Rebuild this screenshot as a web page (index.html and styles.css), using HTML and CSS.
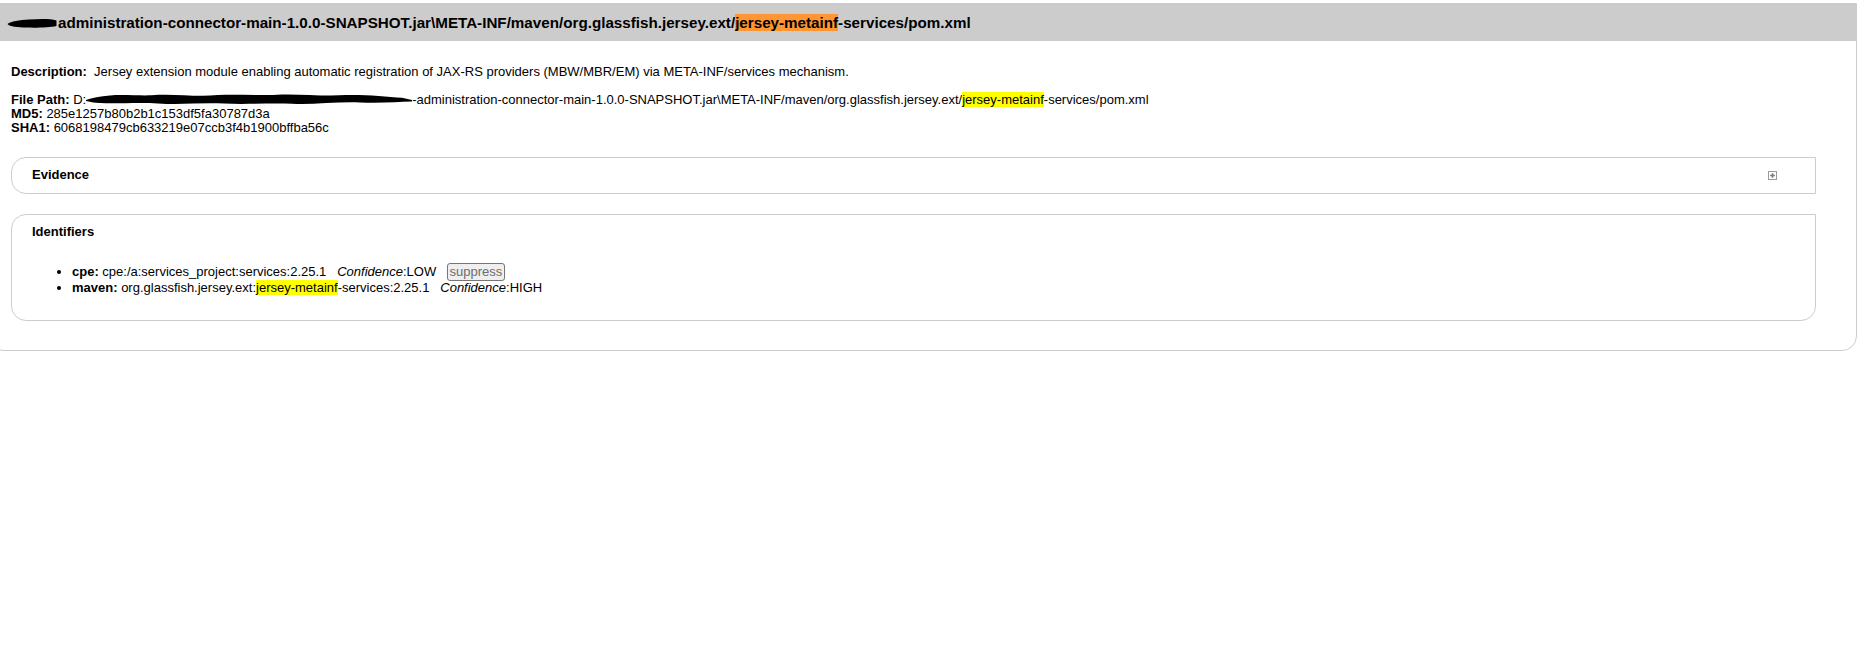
FILE: index.html
```html
<!DOCTYPE html>
<html lang="en">
<head>
<meta charset="utf-8">
<title>Dependency report</title>
<link rel="stylesheet" href="styles.css">
</head>
<body>
<div class="section">
  <h3 class="section-header"><svg class="redact-head" width="50" height="10" viewBox="0 0 50 10"><path d="M0.5 6 C4 3.5, 12 2, 22 1.5 C32 1, 43 0.5, 49.5 2.5 L49.5 8 C43 9.5, 32 9.8, 20 9.6 C10 9.4, 3 8.8, 0.5 6 Z" fill="#000"/></svg>administration-connector-main-1.0.0-SNAPSHOT.jar\META-INF/maven/org.glassfish.jersey.ext/<mark class="hl-active">jersey-metainf</mark>-services/pom.xml</h3>
  <div class="section-body">
    <p class="desc"><b>Description:</b>&nbsp; Jersey extension module enabling automatic registration of JAX-RS providers (MBW/MBR/EM) via META-INF/services mechanism.</p>
    <p class="meta"><b>File Path:</b> D:<svg class="redact-path" width="326" height="11" viewBox="0 0 326 11"><path d="M0 6 C6 3.5, 14 2.5, 24 1.5 C38 0, 58 2.5, 72 0.8 C92 0, 112 3, 132 1 C152 0, 176 2, 196 0.5 C216 0, 240 2.5, 260 1 C280 0.5, 300 2.5, 316 3.8 L326 6 L326 7.5 C312 7.8, 294 9.4, 274 8.4 C250 7.6, 228 10.8, 206 9.8 C184 8.8, 162 10.8, 138 9.6 C116 8.6, 94 10.8, 72 9.4 C50 8.2, 30 10, 14 9 C8 8.6, 3 7.8, 0 7 Z" fill="#000"/></svg>-administration-connector-main-1.0.0-SNAPSHOT.jar\META-INF/maven/org.glassfish.jersey.ext/<mark class="hl">jersey-metainf</mark>-services/pom.xml<br>
    <b>MD5:</b> 285e1257b80b2b1c153df5fa30787d3a<br>
    <b>SHA1:</b> 6068198479cb633219e07ccb3f4b1900bffba56c</p>
    <div class="box box-evidence">
      <h4 class="box-title">Evidence</h4>
      <svg class="expand-icon" width="9" height="9" viewBox="0 0 9 9"><rect x="0.5" y="0.5" width="8" height="8" fill="#fff" stroke="#9a9a9a"/><path d="M4.5 2.2 V6.8 M2.2 4.5 H6.8" stroke="#7a7a7a" stroke-width="1.6"/></svg>
    </div>
    <div class="box box-identifiers">
      <h4 class="box-title">Identifiers</h4>
      <ul class="id-list">
        <li><b>cpe:</b> cpe:/a:services_project:services:2.25.1&nbsp;&nbsp; <i>Confidence</i>:LOW&nbsp;&nbsp; <button class="suppress" type="button">suppress</button></li>
        <li><b>maven:</b> org.glassfish.jersey.ext:<mark class="hl">jersey-metainf</mark>-services:2.25.1&nbsp;&nbsp; <i>Confidence</i>:HIGH</li>
      </ul>
    </div>
  </div>
</div>
</body>
</html>
```

FILE: styles.css
```css
html, body {
  margin: 0;
  padding: 0;
  background: #fff;
}

body {
  font-family: "Liberation Sans", Arial, sans-serif;
  font-size: 13px;
  color: #000;
  overflow: hidden;
}

.section {
  margin: 3px 10px 0 -12px;
  border: 1px solid #cccccc;
  border-radius: 0 0 15px 15px;
}

.section-header {
  margin: 0;
  height: 37px;
  line-height: 38px;
  padding-left: 18px;
  background: #cccccc;
  font-size: 15.2px;
  font-weight: bold;
  white-space: nowrap;
}

.redact-head {
  display: inline-block;
  vertical-align: 0;
  margin-right: 1px;
}

.redact-path {
  display: inline-block;
  vertical-align: -1px;
}

mark {
  color: inherit;
}

.hl-active {
  background: #ff9632;
}

.hl {
  background: #ffff00;
}

.section-body {
  padding: 23.5px 40px 29px 22px;
  line-height: 14.17px;
}

.desc {
  margin: 0 0 14px;
}

.meta {
  margin: 0 0 22px;
  white-space: nowrap;
}

.box {
  border: 1px solid #cccccc;
}

.box-title {
  margin: 0;
  font-size: 13px;
  font-weight: bold;
  line-height: 14.17px;
}

.box-evidence {
  display: flex;
  align-items: center;
  justify-content: space-between;
  padding: 10px 38px 11px 20px;
  border-radius: 15px 0 0 15px;
  margin-bottom: 19.5px;
}

.expand-icon {
  display: block;
}

.box-identifiers {
  padding: 10px 20px 24px;
  border-radius: 15px 0 15px 15px;
}

.id-list {
  margin: 25px 0 0;
  padding-left: 40px;
}

.id-list li {
  line-height: 16px;
}

.suppress {
  box-sizing: border-box;
  height: 18px;
  margin: -2px 0;
  padding: 0 1.5px;
  font-family: "Liberation Sans", Arial, sans-serif;
  font-size: 13px;
  line-height: 16px;
  color: #6d6d6d;
  background: #efefef;
  border: 1px solid #767676;
  border-radius: 3px;
}
```
